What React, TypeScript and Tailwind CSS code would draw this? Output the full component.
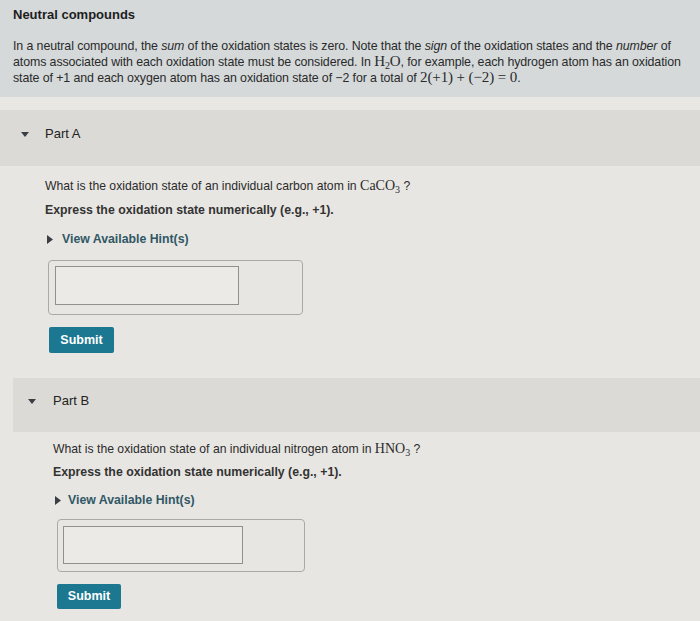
import React from "react";

const serif = "font-['Liberation_Serif',serif] leading-none";

const Tri = ({ dir }: { dir: "down" | "right" }) =>
  dir === "down" ? (
    <svg width="8" height="5" viewBox="0 0 8 5">
      <path d="M0 0 L8 0 L4 5 Z" fill="#3a3f45" />
    </svg>
  ) : (
    <svg width="6" height="9" viewBox="0 0 6 9">
      <path d="M0 0 L6 4.5 L0 9 Z" fill="#3a3f45" />
    </svg>
  );

const Sub = ({ children }: { children: React.ReactNode }) => (
  <span className="relative top-[3px] text-[10px] leading-none">{children}</span>
);

interface PartProps {
  label: string;
  formula: React.ReactNode;
  element: string;
  s: {
    header: string;
    label: string;
    body: string;
    text: string;
    express: string;
    hint: string;
    hintGap: string;
    box: string;
    inner: string;
    button: string;
  };
}

const Part: React.FC<PartProps> = ({ label, formula, element, s }) => (
  <div>
    <div className={`flex items-center bg-[#dcdad6] ${s.header}`}>
      <Tri dir="down" />
      <span className={`text-[13px] text-[#222] ${s.label}`}>{label}</span>
    </div>
    <div className={s.body}>
      <div className={`${s.text} text-[12.2px] text-[#2b2b2b] leading-[16px]`}>
        What is the oxidation state of an individual {element} atom in{" "}
        <span className={`${serif} text-[14px]`}>{formula}</span> ?
      </div>
      <div
        className={`${s.text} ${s.express} text-[12.3px] font-bold text-[#333] leading-[16px]`}
      >
        Express the oxidation state numerically (e.g., +1).
      </div>
      <div className={`flex items-center h-[16px] ${s.hint} ${s.hintGap}`}>
        <Tri dir="right" />
        <span className="text-[12.3px] font-bold text-[#2f5866]">
          View Available Hint(s)
        </span>
      </div>
      <div className={`border border-[#a9aaa8] rounded-[4px] ${s.box}`}>
        <div className={`border border-[#8f918f] bg-[#eceae6] ${s.inner}`} />
      </div>
      <button
        className={`block bg-[#1c7891] text-white text-[12.5px] font-bold rounded-[2px] ${s.button}`}
      >
        Submit
      </button>
    </div>
  </div>
);

export default function App() {
  return (
    <div className="w-[700px] h-[621px] overflow-hidden bg-[#e8e6e2] font-['Liberation_Sans',Arial,sans-serif]">
      <div className="bg-[#d5d9da] px-[13px] pt-[7px] pb-[11px]">
        <div className="text-[13px] font-bold text-[#1d1d1d] leading-[16px]">
          Neutral compounds
        </div>
        <p className="mt-[15px] text-[12.4px] leading-[16px] text-[#2a2a2a] tracking-[-0.1px]">
          In a neutral compound, the <i>sum</i> of the oxidation states is zero.
          Note that the <i>sign</i> of the oxidation states and the{" "}
          <i>number</i> of atoms associated with each oxidation state must be
          considered. In{" "}
          <span className={`${serif} text-[15px]`}>
            H<Sub>2</Sub>O
          </span>
          , for example, each hydrogen atom has an oxidation state of +1 and each
          oxygen atom has an oxidation state of −2 for a total of{" "}
          <span className={`${serif} text-[15px]`}>2(+1) + (−2) = 0</span>.
        </p>
      </div>
      <div className="h-[13px] bg-[#e9e7e4]" />
      <Part
        label="Part A"
        element="carbon"
        formula={
          <>
            CaCO<Sub>3</Sub>
          </>
        }
        s={{
          header: "h-[56px] pl-[21px] pb-[8px]",
          label: "ml-[16px]",
          body: "pt-[12px]",
          text: "pl-[45px]",
          express: "mt-[8px]",
          hint: "mt-[13px] pl-[47px]",
          hintGap: "gap-[9px]",
          box: "mt-[13px] ml-[48px] w-[255px] h-[55px] pl-[6px] pt-[5px]",
          inner: "w-[184px] h-[39px]",
          button: "mt-[12px] ml-[49px] w-[65px] h-[26px]",
        }}
      />
      <div className="h-[25px]" />
      <Part
        label="Part B"
        element="nitrogen"
        formula={
          <>
            HNO<Sub>3</Sub>
          </>
        }
        s={{
          header: "h-[54px] ml-[13px] pl-[15px] pb-[8px]",
          label: "ml-[17px]",
          body: "pt-[9px]",
          text: "pl-[53px]",
          express: "mt-[7px]",
          hint: "mt-[12px] pl-[55px]",
          hintGap: "gap-[7px]",
          box: "mt-[11px] ml-[57px] w-[248px] h-[53px] pl-[5px] pt-[6px]",
          inner: "w-[180px] h-[38px]",
          button: "mt-[12px] ml-[57px] w-[64px] h-[25px]",
        }}
      />
    </div>
  );
}
